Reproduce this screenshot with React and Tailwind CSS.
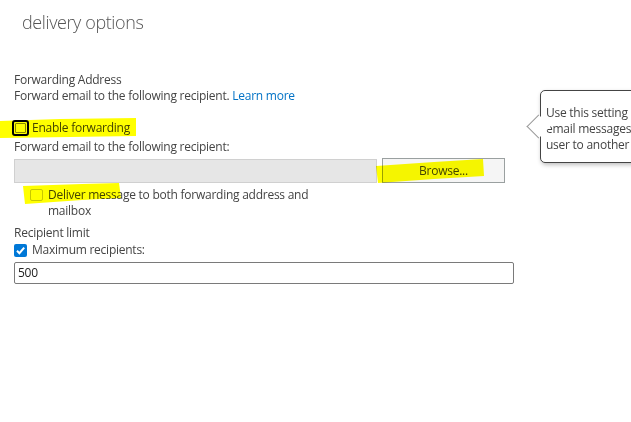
import React from "react";

function Highlight({ points, left, top, width, height }) {
  return (
    <svg
      className="absolute pointer-events-none mix-blend-multiply"
      style={{ left, top }}
      width={width}
      height={height}
      viewBox={`0 0 ${width} ${height}`}
    >
      <polygon points={points} fill="#ffff00" />
    </svg>
  );
}

export default function App() {
  return (
    <div
      className="relative w-[631px] h-[422px] overflow-hidden bg-white text-[12px] leading-[16px] tracking-[-0.25px] text-[#444]"
      style={{ fontFamily: '"Open Sans", "Noto Sans", sans-serif' }}
    >
      <div className="pl-[22px] pt-[8px] text-[18px] leading-[28px] font-light tracking-[-0.4px] text-[#555]">
        delivery options
      </div>

      <div className="pl-[14px] pt-[36px]">
        <div>Forwarding Address</div>
        <div>
          Forward email to the following recipient.{" "}
          <span className="text-[#0072c6]">Learn more</span>
        </div>

        <div className="mt-[16px] flex items-center h-[16px] -ml-[2px]">
          <span className="w-[17px] h-[16px] rounded-[3px] border-2 border-black flex items-center justify-center">
            <span className="w-[11px] h-[10px] rounded-[1px] border border-[#888]" />
          </span>
          <span className="ml-[3px]">Enable forwarding</span>
        </div>

        <div className="mt-[3px]">Forward email to the following recipient:</div>

        <div className="mt-[4px] flex gap-[5px]">
          <div className="w-[363px] h-[24px] bg-[#e6e6e6] border border-[#d0d0d0]" />
          <button className="w-[123px] h-[25px] -mt-[1px] bg-[#f5f5f5] border border-[#9aa0a0] text-[12px] text-[#444]">
            Browse...
          </button>
        </div>

        <div className="mt-[4px] pl-[16px] flex items-start">
          <span className="mt-[2px] w-[13px] h-[12px] rounded-[2px] border border-[#c8c8c8] shrink-0" />
          <span className="ml-[5px] w-[262px]">
            Deliver message to both forwarding address and mailbox
          </span>
        </div>

        <div className="mt-[6px]">Recipient limit</div>
        <div className="mt-[1px] flex items-center h-[16px]">
          <span className="w-[13px] h-[13px] rounded-[2px] bg-[#0078d7] flex items-center justify-center">
            <svg width="11" height="11" viewBox="0 0 11 11">
              <path d="M2 5.8 L4.4 8.2 L9.2 2.6" fill="none" stroke="#fff" strokeWidth="2" />
            </svg>
          </span>
          <span className="ml-[5px]">Maximum recipients:</span>
        </div>
        <div className="mt-[4px] w-[500px] h-[22px] border border-[#7a7a7a] rounded-[2px] flex items-center pl-[3px] text-[#222]">
          500
        </div>
      </div>

      {/* Tooltip callout */}
      <div className="absolute left-[540px] top-[90px] w-[120px] h-[73px] bg-white border border-[#444] rounded-[5px] shadow-[1px_2px_4px_rgba(0,0,0,0.25)] pl-[5px] pt-[14px] leading-[16px] whitespace-nowrap text-[#444]">
        <div>Use this setting</div>
        <div>email messages</div>
        <div>user to another</div>
        <span className="absolute left-[-11px] top-[27px] w-[17px] h-[17px] bg-white border-l border-b border-[#999] rotate-45" />
      </div>

      <Highlight left={0} top={116} width={140} height={24} points="0,5 60,3 136,2 136,20 70,21 0,22" />
      <Highlight left={374} top={158} width={112} height={27} points="2,8 60,4 109,1 110,18 60,21 4,25" />
      <Highlight left={22} top={182} width={102} height={24} points="1,4 60,2 97,1 99,16 60,18 3,22" />
    </div>
  );
}
